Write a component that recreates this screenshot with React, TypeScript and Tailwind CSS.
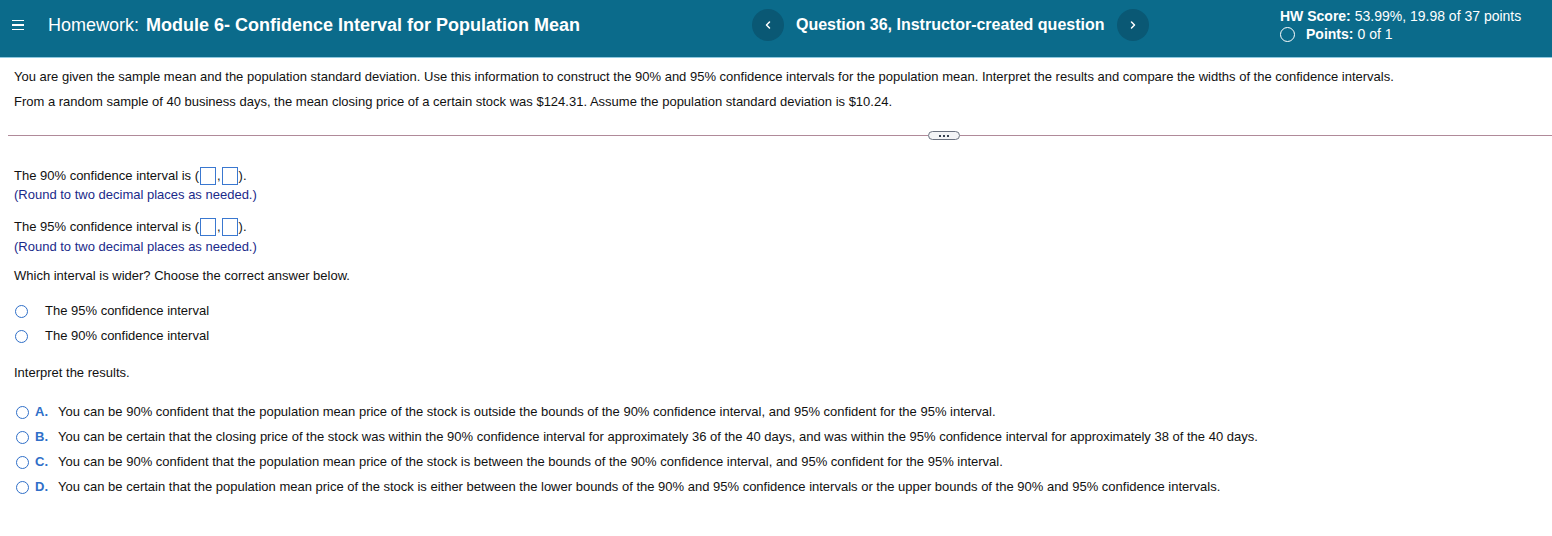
import { ChevronLeft, ChevronRight } from 'lucide-react';

const font = { fontFamily: '"Liberation Sans", Arial, sans-serif' };

function Radio() {
  return <span className="inline-block h-[13px] w-[13px] shrink-0 rounded-full border border-[#2f6fc8] bg-white" />;
}

function AnswerBox() {
  return <span className="inline-block h-[18px] w-[16px] border border-[#3a78d0]" />;
}

const choices = [
  ['A.', 'You can be 90% confident that the population mean price of the stock is outside the bounds of the 90% confidence interval, and 95% confident for the 95% interval.'],
  ['B.', 'You can be certain that the closing price of the stock was within the 90% confidence interval for approximately 36 of the 40 days, and was within the 95% confidence interval for approximately 38 of the 40 days.'],
  ['C.', 'You can be 90% confident that the population mean price of the stock is between the bounds of the 90% confidence interval, and 95% confident for the 95% interval.'],
  ['D.', 'You can be certain that the population mean price of the stock is either between the lower bounds of the 90% and 95% confidence intervals or the upper bounds of the 90% and 95% confidence intervals.'],
];

export default function App() {
  return (
    <div className="h-[536px] w-[1552px] overflow-hidden bg-white text-[13px] text-[#111]" style={font}>
      {/* top bar */}
      <header className="flex h-[58px] items-center border-b border-[#8fc9e0] bg-[#0b6b8b] pb-[7px] text-white">
        <div className="flex w-[752px] items-center">
          <span className="ml-[12px] flex w-[12px] flex-col gap-[3px]">
            <span className="h-[1.5px] bg-white" />
            <span className="h-[1.5px] bg-white" />
            <span className="h-[1.5px] bg-white" />
          </span>
          <span className="ml-[24px] text-[18px]">Homework:</span>
          <span className="ml-[7px] text-[18px] font-bold">Module 6- Confidence Interval for Population Mean</span>
        </div>
        <div className="flex w-[528px] items-center">
          <span className="flex h-[32px] w-[32px] items-center justify-center rounded-full bg-[#0a5874]">
            <ChevronLeft size={12} strokeWidth={3} />
          </span>
          <span className="ml-[12px] text-[16px] font-bold">Question 36, Instructor-created question</span>
          <span className="ml-[12px] flex h-[32px] w-[32px] items-center justify-center rounded-full bg-[#0a5874]">
            <ChevronRight size={12} strokeWidth={3} />
          </span>
        </div>
        <div className="flex flex-col gap-[1px] text-[14px] leading-[17px]">
          <div>
            <span className="font-bold">HW Score:</span> 53.99%, 19.98 of 37 points
          </div>
          <div className="flex items-center">
            <span className="h-[15px] w-[15px] rounded-full border-[1.5px] border-white" />
            <span className="ml-[11px] font-bold">Points:</span>
            <span className="ml-[4px]">0 of 1</span>
          </div>
        </div>
      </header>

      {/* problem statement */}
      <div className="px-[14px] pt-[6px] leading-[25px]">
        <p>You are given the sample mean and the population standard deviation. Use this information to construct the 90% and 95% confidence intervals for the population mean. Interpret the results and compare the widths of the confidence intervals.</p>
        <p>From a random sample of 40 business days, the mean closing price of a certain stock was $124.31. Assume the population standard deviation is $10.24.</p>
      </div>

      <div className="mt-[17px] ml-[8px] flex h-[9px] items-center">
        <div className="h-px w-[920px] bg-[#b08a99]" />
        <span className="flex h-[9px] w-[32px] items-center justify-center gap-[2px] rounded-full border border-[#6b7280] bg-[#f3f4f6]">
          <span className="h-[2px] w-[2px] bg-[#374151]" />
          <span className="h-[2px] w-[2px] bg-[#374151]" />
          <span className="h-[2px] w-[2px] bg-[#374151]" />
        </span>
        <div className="h-px flex-1 bg-[#b08a99]" />
      </div>

      <div className="px-[14px] pt-[27px]">
        <div className="flex h-[18px] items-center gap-[1px]">
          The 90% confidence interval is (<AnswerBox />,<AnswerBox />).
        </div>
        <div className="mt-[1px] flex h-[18px] items-center text-[#1a2a8a]">(Round to two decimal places as needed.)</div>

        <div className="mt-[14px] flex h-[18px] items-center gap-[1px]">
          The 95% confidence interval is (<AnswerBox />,<AnswerBox />).
        </div>
        <div className="mt-[2px] flex h-[18px] items-center text-[#1a2a8a]">(Round to two decimal places as needed.)</div>

        <div className="mt-[11px] flex h-[18px] items-center">Which interval is wider? Choose the correct answer below.</div>

        <div className="mt-[17px] flex flex-col gap-[7px]">
          {['The 95% confidence interval', 'The 90% confidence interval'].map((t) => (
            <div key={t} className="flex h-[18px] items-center">
              <span className="ml-[1px] flex"><Radio /></span>
              <span className="ml-[17px]">{t}</span>
            </div>
          ))}
        </div>

        <div className="mt-[19px] flex h-[18px] items-center">Interpret the results.</div>

        <div className="mt-[21px] flex flex-col gap-[7px]">
          {choices.map(([l, t]) => (
            <div key={l} className="flex h-[18px] items-center">
              <span className="ml-[2px] flex"><Radio /></span>
              <span className="ml-[6px] w-[23px] font-bold text-[#2f6fc8]">{l}</span>
              <span>{t}</span>
            </div>
          ))}
        </div>
      </div>
    </div>
  );
}
